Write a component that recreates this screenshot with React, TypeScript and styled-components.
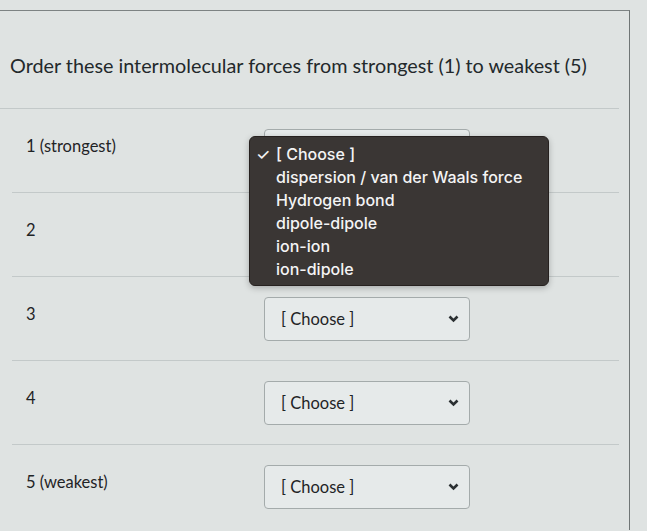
import React from "react";
import styled, { createGlobalStyle } from "styled-components";

const GlobalStyle = createGlobalStyle`
  html, body {
    margin: 0;
    padding: 0;
    background: #dfe3e2;
  }
  body {
    font-family: Lato, "Open Sans", "Liberation Sans", sans-serif;
    color: #2d3b45;
  }
`;

const Frame = styled.div`
  width: 630px;
  height: 520px;
  margin-top: 10px;
  border-top: 1px solid #7d8383;
  border-right: 1px solid #6f7575;
  box-sizing: border-box;
`;

const Question = styled.div`
  padding: 42px 0 0 10px;
  height: 98px;
  box-sizing: border-box;
  font-size: 19.8px;
  line-height: 24px;
  color: #23292b;
  border-bottom: 1px solid #c3c9c9;
  margin-right: 10px;
`;

const Row = styled.div`
  position: relative;
  display: flex;
  align-items: flex-start;
  padding: 20px 0 19px;
  margin: 0 10px 0 12px;
  border-bottom: 1px solid #c3c9c9;
  &:last-child {
    border-bottom: none;
  }
`;

const Label = styled.div`
  width: 252px;
  padding-left: 14px;
  margin-top: 7px;
  box-sizing: border-box;
  font-size: 16.5px;
  line-height: 20px;
  color: #1f2426;
  flex-shrink: 0;
`;

const SelectWrap = styled.div`
  position: relative;
`;

const SelectBox = styled.div`
  width: 206px;
  height: 44px;
  box-sizing: border-box;
  border: 1px solid #a4abab;
  border-radius: 4px;
  background: #e6eaea;
  display: flex;
  align-items: center;
  justify-content: space-between;
  padding: 0 10px 0 16px;
  font-size: 16.5px;
  color: #1f2426;
`;

const SelectText = styled.span<{ $covered?: boolean }>`
  visibility: ${(p) => (p.$covered ? "hidden" : "visible")};
`;

const Popup = styled.div`
  position: absolute;
  left: -15px;
  top: 7px;
  width: 300px;
  height: 150px;
  box-sizing: border-box;
  padding: 6px 0;
  background: #3a3634;
  border: 1px solid #26211f;
  border-radius: 6px;
  box-shadow: 0 2px 6px rgba(0, 0, 0, 0.25);
  z-index: 5;
  font-family: Inter, "Liberation Sans", sans-serif;
  font-weight: 500;
  font-size: 16px;
  color: #f4f4f4;
`;

const Option = styled.div`
  position: relative;
  height: 23px;
  line-height: 23px;
  padding-left: 26px;
  white-space: nowrap;
`;

const Check = styled.span`
  position: absolute;
  left: 6px;
  top: 0;
`;

const Chevron = () => (
  <svg width="11" height="8" viewBox="0 0 11 8">
    <path d="M1.5 1.5 L5.5 5.5 L9.5 1.5" fill="none" stroke="#2b3032" strokeWidth="2.6" />
  </svg>
);

const options = [
  "[ Choose ]",
  "dispersion / van der Waals force",
  "Hydrogen bond",
  "dipole-dipole",
  "ion-ion",
  "ion-dipole",
];

const rows = ["1 (strongest)", "2", "3", "4", "5 (weakest)"];

export default function App() {
  return (
    <>
      <GlobalStyle />
      <Frame>
        <Question>Order these intermolecular forces from strongest (1) to weakest (5)</Question>
        {rows.map((label, i) => (
          <Row key={label}>
            <Label>{label}</Label>
            <SelectWrap>
              <SelectBox>
                <SelectText $covered={i < 2}>[ Choose ]</SelectText>
                <Chevron />
              </SelectBox>
              {i === 0 && (
                <Popup>
                  {options.map((o, j) => (
                    <Option key={o}>
                      {j === 0 && <Check>✓</Check>}
                      {o}
                    </Option>
                  ))}
                </Popup>
              )}
            </SelectWrap>
          </Row>
        ))}
      </Frame>
    </>
  );
}
